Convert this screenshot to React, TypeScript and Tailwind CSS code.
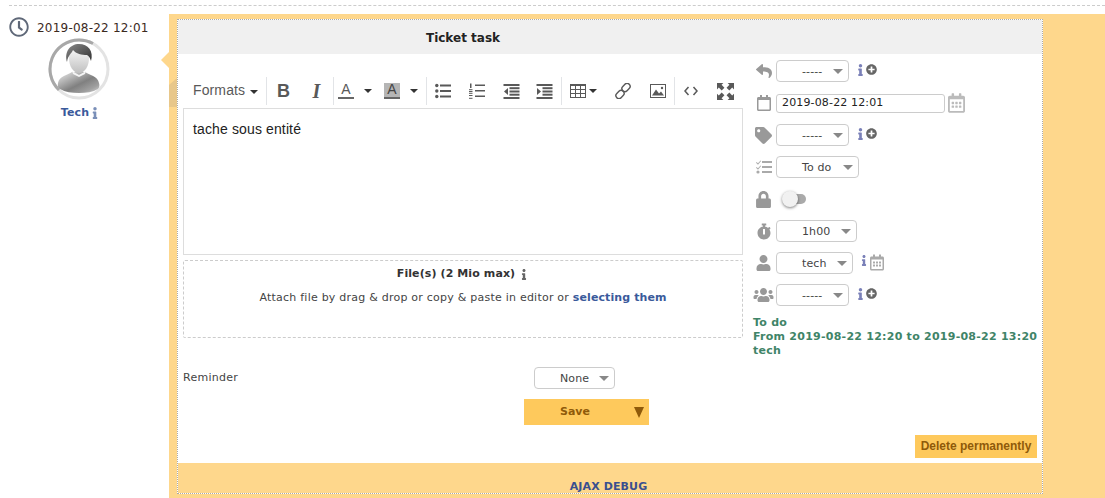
import React from "react";
import { FaReply, FaRegCalendar, FaTag, FaLock, FaStopwatch, FaUser, FaUsers, FaInfo, FaPlusCircle, FaRegCalendarAlt, FaRegClock } from "react-icons/fa";

const G = "#595959";

function Sel({ w, label }: { w: string; label: string }) {
  return (
    <div className={`${w} h-[22px] shrink-0 border border-[#ccc] rounded-[4px] bg-white relative flex items-center justify-start pl-[25px] pt-[2px] text-[11px] tracking-[0.12px] text-[#444]`}>
      <span>{label}</span>
      <span className="absolute right-[5px] top-[8px] w-0 h-0 border-l-[5px] border-r-[5px] border-t-[5px] border-l-transparent border-r-transparent border-t-[#888]" />
    </div>
  );
}

function Row({ icon, children }: { icon: React.ReactNode; children: React.ReactNode }) {
  return (
    <div className="h-[32px] flex items-center">
      <div className="w-[23px] pr-[2px] flex justify-center text-[#999] shrink-0">{icon}</div>
      {children}
    </div>
  );
}

function InfoPlus() {
  return (
    <div className="flex items-center ml-[8px] -mt-[3px]">
      <FaInfo className="text-[#7a80b8] w-[7px] h-[12px]" />
      <FaPlusCircle className="text-[#666] w-[11px] h-[11px] ml-[2px]" />
    </div>
  );
}

function Sep() {
  return <div className="w-px h-[28px] bg-[#e2e4e7] shrink-0" />;
}

function Btn({ w, children }: { w: string; children: React.ReactNode }) {
  return <div className={`${w} h-[28px] flex items-center justify-center shrink-0`}>{children}</div>;
}

function Caret({ className = "" }: { className?: string }) {
  return <span className={`inline-block w-0 h-0 border-l-[4px] border-r-[4px] border-t-[4px] border-l-transparent border-r-transparent border-t-[#333] ${className}`} />;
}

function LinesIcon({ kind }: { kind: "ul" | "ol" | "out" | "in" }) {
  if (kind === "ul" || kind === "ol") {
    return (
      <svg width="16" height="16" viewBox="0 0 16 16" fill={G}>
        {kind === "ul" ? (
          <>
            <circle cx="1.8" cy="2.5" r="1.7" />
            <circle cx="1.8" cy="8" r="1.7" />
            <circle cx="1.8" cy="13.5" r="1.7" />
            <rect x="5" y="1.5" width="11" height="2" />
            <rect x="5" y="7" width="11" height="2" />
            <rect x="5" y="12.5" width="11" height="2" />
          </>
        ) : (
          <>
            <rect x="1" y="0.5" width="1.5" height="4.5" />
            <rect x="0" y="6.2" width="3.5" height="1" />
            <rect x="0" y="8" width="3.5" height="1" />
            <rect x="0" y="9.8" width="3.5" height="1" />
            <rect x="0" y="12" width="3.5" height="1" />
            <rect x="0" y="14.8" width="3.5" height="1" />
            <rect x="6" y="1.5" width="10" height="1.5" />
            <rect x="6" y="7" width="10" height="1.5" />
            <rect x="6" y="12.5" width="10" height="1.5" />
          </>
        )}
      </svg>
    );
  }
  return (
    <svg width="17" height="15" viewBox="0 0 16 15" fill={G}>
      <rect x="0" y="0" width="16" height="2" />
      <rect x="6" y="3.2" width="10" height="2" />
      <rect x="6" y="6.5" width="10" height="2" />
      <rect x="6" y="9.7" width="10" height="2" />
      <rect x="0" y="13" width="16" height="2" />
      {kind === "out" ? <path d="M4.5 4v7L0.5 7.5z" /> : <path d="M0.5 4v7L4.5 7.5z" />}
    </svg>
  );
}

function Avatar() {
  return (
    <svg width="62" height="62" viewBox="0 0 62 62" className="block">
      <defs>
        <linearGradient id="body" x1="0" y1="0" x2="1" y2="1">
          <stop offset="0" stopColor="#ececec" />
          <stop offset="0.55" stopColor="#808080" />
          <stop offset="0.8" stopColor="#a0a0a0" />
          <stop offset="1" stopColor="#d8d8d8" />
        </linearGradient>
        <linearGradient id="face" x1="0" y1="0" x2="0" y2="1">
          <stop offset="0" stopColor="#fdfdfd" />
          <stop offset="1" stopColor="#c0c0c0" />
        </linearGradient>
        <linearGradient id="hair" x1="0" y1="0" x2="1" y2="1">
          <stop offset="0" stopColor="#8a8a8a" />
          <stop offset="1" stopColor="#2f2f2f" />
        </linearGradient>
      </defs>
      <circle cx="31" cy="31" r="29" fill="#fff" stroke="#e3e3e3" strokeWidth="3" />
      <path d="M11 52A29 29 0 0 1 31 2A29 29 0 0 1 45 5.5" fill="none" stroke="#a8a8a8" strokeWidth="3" />
      <path d="M24 34c-4 3-13 4-14 11-.5 3 0 5 2 6 5 3 12 4 19 4 7 0 14-1 19-4 1-1 2-3 1-6-1-7-10-8-14-11z" fill="url(#body)" />
      <path d="M24 33l7 4 7-4-1 3-6 3-6-3z" fill="#f4f4f4" />
      <path d="M21 20c0-9 4-12 10-12s10 4 10 12c0 8-4 15-10 15s-10-7-10-15z" fill="url(#face)" />
      <path d="M19 24c-3-10 3-18 12-18 9 0 15 7 12 17-1-3-2-5-4-6-5 0-11-1-14-5-1 3-5 5-6 12z" fill="url(#hair)" />
    </svg>
  );
}

export default function App() {
  return (
    <div className="w-[1105px] h-[498px] overflow-hidden bg-white text-[#333] text-[11px] font-['DejaVu_Sans',sans-serif] flex flex-col">
      <div className="h-[14px] shrink-0 pt-[5px] pl-[9px]">
        <div className="border-t border-dashed border-[#ccc]" />
      </div>
      <div className="flex flex-1 min-h-0">
        <div className="w-[161px] shrink-0">
          <div className="flex items-center pl-[9px] pt-[3px] h-[24px]">
            <FaRegClock className="text-[#5f6878] w-[20px] h-[20px] shrink-0 -mt-[2px]" />
            <span className="ml-[8px] text-[12px] text-[#3b2a1e] tracking-[0.22px] whitespace-nowrap">2019-08-22 12:01</span>
          </div>
          <div className="flex justify-center ml-[-3px]">
            <Avatar />
          </div>
          <div className="flex justify-center items-center mt-[5px] ml-[-2px] font-bold text-[#3a5a9b] text-[11px] tracking-[0.1px]">
            Tech
            <FaInfo className="text-[#7a8fb8] w-[6px] h-[12px] ml-[3px]" />
          </div>
        </div>
        <div className="relative flex-1 ml-[8px] bg-[#fed78c] pt-[5px] pl-[8px] pr-[62px] pb-[4px] flex flex-col min-w-0">
          <span className="absolute left-[-8px] top-[38px] w-0 h-0 border-t-[8px] border-b-[8px] border-r-[8px] border-t-transparent border-b-transparent border-r-[#fed78c]" />
          <span className="absolute left-0 top-[64px] w-[8px] h-[29px] bg-[#e8c78a] [clip-path:polygon(0_7px,100%_0,100%_100%,0_100%)]" />
          <div className="relative flex-1 flex flex-col bg-white border border-dotted border-[#aaa] min-h-0">
            <div className="h-[34px] bg-[#f0f0f0] shrink-0 flex items-center pt-[1px]">
              <div className="w-[570px] text-center font-bold text-[12px] text-[#222]">Ticket task</div>
            </div>
            <div className="flex-1 flex flex-col pl-[5px] pr-[5px] min-h-0">
              <div className="flex">
                <div className="w-[560px] shrink-0 pt-[23px]">
                  <div className="h-[31px] flex items-start font-['Liberation_Sans',sans-serif] text-[#595959]">
                    <div className="w-[83px] h-[27px] flex items-center pl-[10px] text-[14px] tracking-[0.12px] shrink-0">
                      Formats
                      <Caret className="ml-[5px] mt-[2px]" />
                    </div>
                    <Sep />
                    <Btn w="w-[33px]"><span className="font-['Liberation_Sans',sans-serif] font-bold text-[18px] text-[#595959]">B</span></Btn>
                    <Btn w="w-[33px]"><span className="font-['Liberation_Serif',serif] italic font-bold text-[20px] text-[#595959]">I</span></Btn>
                    <Sep />
                    <Btn w="w-[46px]">
                      <span className="flex flex-col items-center text-[14px] leading-[13px] text-[#595959] border-b-2 border-[#666] w-[16px] pb-[1px] ml-[-4px]">A</span>
                      <Caret className="ml-[10px]" />
                    </Btn>
                    <Btn w="w-[46px]">
                      <span className="flex flex-col items-center text-[14px] leading-[13px] text-[#444] bg-[#b5b5b5] border-b-2 border-[#666] w-[16px] pb-[1px] ml-[-4px]">A</span>
                      <Caret className="ml-[10px]" />
                    </Btn>
                    <Sep />
                    <Btn w="w-[32px]"><LinesIcon kind="ul" /></Btn>
                    <Btn w="w-[36px]"><LinesIcon kind="ol" /></Btn>
                    <Btn w="w-[32px]"><LinesIcon kind="out" /></Btn>
                    <Btn w="w-[34px]"><LinesIcon kind="in" /></Btn>
                    <Sep />
                    <Btn w="w-[43px]">
                      <svg width="16" height="14" viewBox="0 0 16 14" fill="none" stroke="#595959" strokeWidth="1" className="shrink-0">
                        <rect x=".5" y=".5" width="15" height="13" strokeWidth="1" />
                        <path d="M.5 1h15" strokeWidth="2" />
                        <path d="M5.5 1v12M10.5 1v12M1 5.5h14M1 9.5h14" />
                      </svg>
                      <Caret className="ml-[3px]" />
                    </Btn>
                    <Btn w="w-[36px]">
                      <svg width="16" height="16" viewBox="0 0 16 16" fill="none" stroke="#595959" strokeWidth="1.4">
                        <rect x="8" y="0" width="6" height="9" rx="3" transform="rotate(45 11 4.5)" />
                        <rect x="2" y="7" width="6" height="9" rx="3" transform="rotate(45 5 11.5)" />
                      </svg>
                    </Btn>
                    <Btn w="w-[33px]">
                      <svg width="16" height="14" viewBox="0 0 16 14">
                        <rect x=".5" y=".5" width="15" height="13" fill="#fff" stroke="#595959" />
                        <path d="M2 11.5l4-6 3 4 2-2 3 4z" fill="#595959" />
                        <circle cx="12" cy="4" r="1.2" fill="#595959" />
                      </svg>
                    </Btn>
                    <Sep />
                    <Btn w="w-[32px]">
                      <svg width="14" height="10" viewBox="0 0 14 10" fill="none" stroke="#595959" strokeWidth="1.5">
                        <path d="M4.5 1L1 5l3.5 4M9.5 1L13 5l-3.5 4" />
                      </svg>
                    </Btn>
                    <Btn w="w-[36px]">
                      <svg width="17" height="17" viewBox="0 0 16 16" fill="#595959">
                        <path d="M0 0h6L4.3 1.7 7 4.4 4.4 7 1.7 4.3 0 6zM16 0v6l-1.7-1.7L11.6 7 9 4.4l2.7-2.7L10 0zM0 16v-6l1.7 1.7L4.4 9 7 11.6l-2.7 2.7L6 16zM16 16h-6l1.7-1.7L9 11.6 11.6 9l2.7 2.7L16 10z" />
                      </svg>
                    </Btn>
                  </div>
                  <div className="h-[147px] border border-[#ddd] font-['Liberation_Sans',sans-serif] text-[14px] tracking-[0.13px] text-[#222] pt-[11px] pl-[9px] leading-[18px]">
                    tache sous entité
                  </div>
                  <div className="h-[78px] mt-[5px] border border-dashed border-[#ccc] rounded-[2px] flex flex-col items-center pt-[6px]">
                    <div className="font-bold text-[#333] flex items-center h-[14px] tracking-[0.1px] ml-[-2px]">
                      File(s) (2 Mio max)
                      <FaInfo className="text-[#666] w-[6px] h-[11px] ml-[6px]" />
                    </div>
                    <div className="mt-[9px] text-[#444] h-[14px] tracking-[0.23px] whitespace-nowrap">
                      Attach file by drag &amp; drop or copy &amp; paste in editor or <span className="font-bold text-[#3a5a9b] tracking-[0.1px]">selecting them</span>
                    </div>
                  </div>
                  <div className="flex items-center mt-[29px] h-[22px]">
                    <div className="w-[351px] text-[#444] tracking-[0.25px] pt-[1px]">Reminder</div>
                    <Sel w="w-[81px]" label="None" />
                  </div>
                  <div className="ml-[341px] mt-[10px] w-[125px] h-[26px] bg-[#fec95c] relative flex items-center justify-center pr-[23px] pt-[1px] font-bold text-[#8f5a0a]">
                    Save
                    <span className="absolute right-[5px] top-[8px] w-0 h-0 border-l-[5px] border-r-[5px] border-t-[11px] border-l-transparent border-r-transparent border-t-[#8f5a0a]" />
                  </div>
                </div>
                <div className="ml-[10px] flex-1 pt-[1px] text-[#444] min-w-0 whitespace-nowrap">
                  <Row icon={<FaReply className="w-[18px] h-[16px]" />}>
                    <Sel w="w-[73px]" label="-----" />
                    <InfoPlus />
                  </Row>
                  <Row icon={<FaRegCalendar className="w-[14px] h-[16px]" />}>
                    <div className="w-[169px] h-[19px] mt-[1px] border border-[#ccc] rounded-[3px] flex items-center pl-[5px] text-[11px] text-[#222] tracking-[0.15px]">2019-08-22 12:01</div>
                    <FaRegCalendarAlt className="ml-[3px] w-[17px] h-[20px] text-[#bbb] -mt-[1px]" />
                  </Row>
                  <Row icon={<FaTag className="w-[17px] h-[17px]" />}>
                    <Sel w="w-[73px]" label="-----" />
                    <InfoPlus />
                  </Row>
                  <Row icon={
                    <svg width="16" height="14" viewBox="0 0 16 14" fill="#aaa">
                      <path d="M.5 2L2 3.2 4.5.5l.6.6L2 4.7 0 2.7zM.5 7L2 8.2 4.5 5.5l.6.6L2 9.7 0 7.7z" />
                      <circle cx="2" cy="12" r="1.6" />
                      <rect x="6" y="1" width="10" height="2" />
                      <rect x="6" y="6" width="10" height="2" />
                      <rect x="6" y="11" width="10" height="2" />
                    </svg>
                  }>
                    <Sel w="w-[83px]" label="To do" />
                  </Row>
                  <Row icon={<FaLock className="w-[15px] h-[17px]" />}>
                    <div className="relative ml-[6px] w-[25px] h-[16px]">
                      <span className="absolute left-[6px] top-[3px] w-[18px] h-[10px] rounded-full bg-[#aaa]" />
                      <span className="absolute left-0 top-0 w-[16px] h-[16px] rounded-full bg-[#f1f1f1] shadow-[0_1px_3px_rgba(0,0,0,0.5)]" />
                    </div>
                  </Row>
                  <Row icon={<FaStopwatch className="w-[14px] h-[17px]" />}>
                    <Sel w="w-[81px]" label="1h00" />
                  </Row>
                  <Row icon={<FaUser className="w-[15px] h-[16px]" />}>
                    <Sel w="w-[77px]" label="tech" />
                    <div className="flex items-center ml-[8px] -mt-[2px]">
                      <FaInfo className="text-[#7a80b8] w-[6px] h-[11px] -mt-[3px]" />
                      <FaRegCalendarAlt className="text-[#aaa] w-[14px] h-[17px] ml-[3px]" />
                    </div>
                  </Row>
                  <Row icon={<FaUsers className="w-[21px] h-[16px]" />}>
                    <Sel w="w-[73px]" label="-----" />
                    <InfoPlus />
                  </Row>
                  <div className="mt-[5px] font-bold text-[#3f8468] leading-[14px] text-[11px] tracking-[0.25px]">
                    <div>To do</div>
                    <div>From 2019-08-22 12:20 to 2019-08-22 13:20</div>
                    <div>tech</div>
                  </div>
                </div>
              </div>
              <div className="flex justify-end mt-[10px]">
                <div className="w-[122px] h-[23px] pb-[2px] bg-[#fec95c] flex items-center justify-center font-['Liberation_Sans',sans-serif] font-bold text-[12px] text-[#8f5a0a]">Delete permanently</div>
              </div>
            </div>
            <div className="h-[30px] shrink-0 bg-[#fed78c] flex items-end justify-center font-bold text-[#3a4f8f] text-[11px] leading-[12px] tracking-[0.12px]">
              <span className="ml-[-3px]">AJAX DEBUG</span>
            </div>
          </div>
        </div>
      </div>
    </div>
  );
}
